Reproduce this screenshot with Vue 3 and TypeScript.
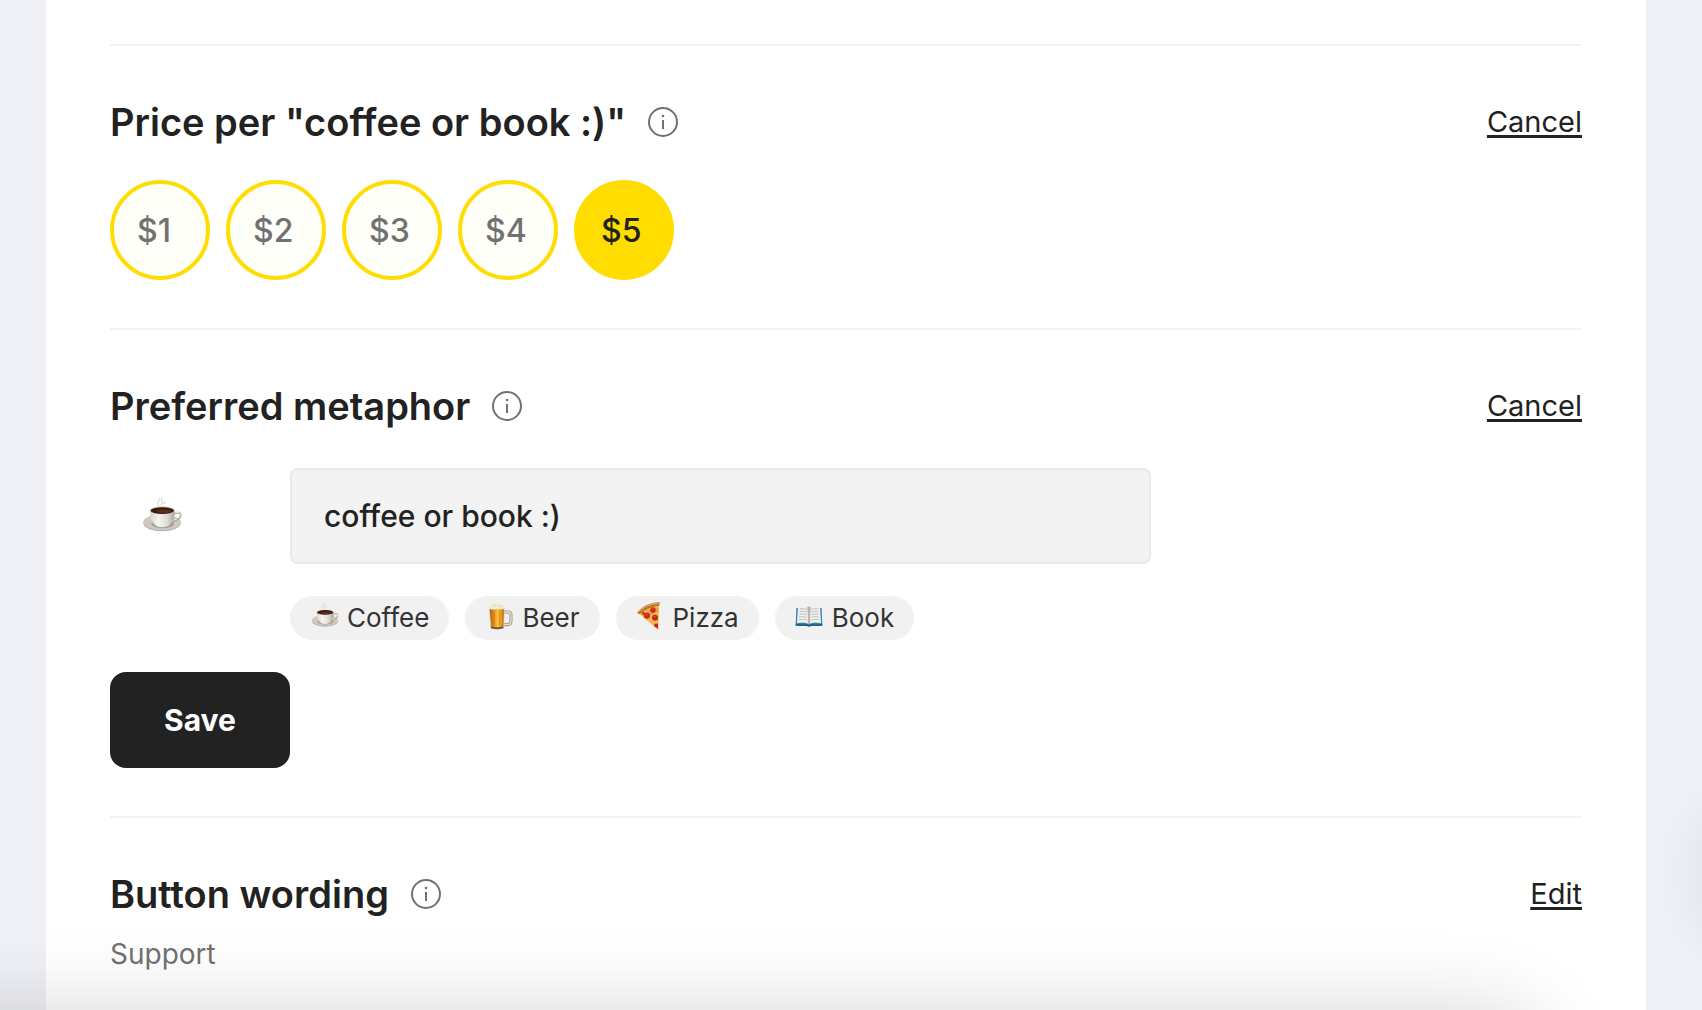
<script setup lang="ts">
import { ref } from 'vue'

const prices = [1, 2, 3, 4, 5]
const price = ref(5)
const metaphor = ref('coffee or book :)')
const presets = ['Coffee', 'Beer', 'Pizza', 'Book'] as const
</script>

<template>
  <div class="page">
    <svg class="defs" aria-hidden="true">
      <defs>
        <linearGradient id="cup-body" x1="0" x2="1">
          <stop offset="0" stop-color="#d9d5cf" />
          <stop offset="0.35" stop-color="#f6f4f0" />
          <stop offset="0.7" stop-color="#dedad4" />
          <stop offset="1" stop-color="#a9a49c" />
        </linearGradient>
        <linearGradient id="beer-fill" x1="0" x2="1">
          <stop offset="0" stop-color="#a9570c" />
          <stop offset="0.25" stop-color="#e08a1c" />
          <stop offset="0.6" stop-color="#ffc93c" />
          <stop offset="1" stop-color="#c4690f" />
        </linearGradient>
        <g id="cup">
          <path d="M84 62q-8-8 0-14 6-4 0-10M90 60q10-6 3-12-7-5 4-10M99 58q6-6 0-10" fill="none" stroke="#d2d2d2" stroke-width="3" />
          <ellipse cx="94" cy="114" rx="56" ry="25" fill="#b5b0a7" />
          <ellipse cx="94" cy="112" rx="56" ry="24" fill="#cdc9c1" />
          <ellipse cx="96" cy="116" rx="34" ry="14" fill="#a39d93" />
          <path d="M130 86q18-7 20 4 0 12-23 18" fill="none" stroke="#aaa59c" stroke-width="6" />
          <path d="M131 84q17-5 18 5 0 9-21 17" fill="none" stroke="#efece7" stroke-width="3" />
          <path d="M57 76q1 51 38 51t38-51z" fill="url(#cup-body)" />
          <ellipse cx="95" cy="76" rx="38" ry="12" fill="#d8d3cc" />
          <ellipse cx="95" cy="77" rx="35" ry="10" fill="#3a1d10" />
          <ellipse cx="99" cy="79" rx="22" ry="5" fill="#5b301b" />
        </g>
      </defs>
    </svg>

    <main class="panel">
      <section class="section">
        <header class="head">
          <h2>Price per "coffee or book :)"</h2>
          <svg class="info" viewBox="0 0 30 30" aria-hidden="true">
            <circle cx="15" cy="15" r="14" />
            <path d="M15 13V22" />
            <circle class="dot" cx="15" cy="9" r="1.3" />
          </svg>
          <a class="action" href="#">Cancel</a>
        </header>
        <div class="prices" role="radiogroup" aria-label="Price">
          <label v-for="p in prices" :key="p" class="price" :class="{ selected: p === price }">
            <input v-model="price" type="radio" name="price" :value="p" />
            <span>${{ p }}</span>
          </label>
        </div>
      </section>

      <section class="section">
        <header class="head">
          <h2>Preferred metaphor</h2>
          <svg class="info" viewBox="0 0 30 30" aria-hidden="true">
            <circle cx="15" cy="15" r="14" />
            <path d="M15 13V22" />
            <circle class="dot" cx="15" cy="9" r="1.3" />
          </svg>
          <a class="action" href="#">Cancel</a>
        </header>
        <form @submit.prevent>
          <div class="metaphor">
            <div class="emoji">
              <svg viewBox="34 30 120 114" aria-hidden="true"><use href="#cup" /></svg>
            </div>
            <input v-model="metaphor" class="field" type="text" aria-label="Preferred metaphor" />
            <div class="presets">
              <button v-for="name in presets" :key="name" type="button" class="preset" @click="metaphor = name.toLowerCase()">
                <svg viewBox="0 0 84 96" aria-hidden="true">
                  <g v-if="name === 'Coffee'" transform="translate(-20 -22) scale(0.69)"><use href="#cup" /></g>
                  <g v-else-if="name === 'Beer'">
                    <path d="M55 30h14q9 0 9 10v17q0 11-10 11H55" fill="none" stroke="#99928a" stroke-width="9" />
                    <path d="M55 30h14q9 0 9 10v17q0 11-10 11H55" fill="none" stroke="#e6e1da" stroke-width="4" />
                    <path d="M12 14h47l-2 64q-21 8-41 0z" fill="#d9c7b0" />
                    <path d="M14 18h43l-2 56q-19 6-36 0z" fill="url(#beer-fill)" />
                    <path d="M27 26v44M43 26v44" stroke="#b8660f" stroke-width="3" opacity="0.5" />
                    <path d="M18 73q19 6 37 0v6q-18 6-37 0z" fill="#7d5237" />
                    <path d="M12 20q-4-9 7-12 7-8 18-5 10-2 15 5 10 2 7 12-10 4-20 0-12 5-27 0z" fill="#f4ead9" />
                    <path d="M20 13q7-6 14-3M42 13q5-3 10 0" fill="none" stroke="#d8c5aa" stroke-width="2" />
                  </g>
                  <g v-else-if="name === 'Pizza'">
                    <path d="M8 34Q32 12 69 8l-2 76Z" fill="#f2b950" />
                    <path d="M16 38Q38 22 67 18v10L28 49z" fill="#e98a36" opacity="0.6" />
                    <path d="M4 31Q28 2 70 0q3 5-1 11Q34 14 11 37q-5 0-7-6z" fill="#b8722a" />
                    <path d="M8 29Q32 6 69 3" fill="none" stroke="#dfa35a" stroke-width="4" />
                    <g fill="#c8261c">
                      <circle cx="51" cy="24" r="8" />
                      <circle cx="33" cy="41" r="9" />
                      <circle cx="57" cy="47" r="9" />
                      <path d="M66 65q-12-2-12 7l12 8z" />
                      <circle cx="22" cy="34" r="4" />
                    </g>
                    <path d="M47 22q4-4 7 0M29 39q4-4 7 0M53 45q4-4 7 0" fill="none" stroke="#ec6a48" stroke-width="2" />
                  </g>
                  <g v-else>
                    <path d="M4 18h76l2 52q-28 3-34 1-6 3-12 0-6 2-34-1z" fill="#3587ae" />
                    <path d="M2 65q22 3 34 1 6 4 12 0 12 2 34-1v6q-22 2-34 1-6 3-12 0-12 1-34-1z" fill="#235f81" />
                    <path d="M9 13q22-7 33 1 11-8 33-1l3 51q-24-6-36 3-12-9-36-3z" fill="#f3f1ed" />
                    <path d="M42 14v53" stroke="#77716b" stroke-width="3" />
                    <path d="M38 15q3 22 2 48M46 15q-3 22-2 48" stroke="#bdb8b1" stroke-width="3" fill="none" />
                    <path d="M14 21q11-3 21 1M14 29q11-3 21 1M13 37q11-3 22 1M12 45q11-3 23 1M12 53q11-3 23 1M49 22q10-4 21-1M49 30q10-4 21-1M49 38q10-4 22-1M49 46q10-4 23-1M49 54q10-4 23-1" fill="none" stroke="#aaa6a0" stroke-width="2" />
                  </g>
                </svg>
                <span>{{ name }}</span>
              </button>
            </div>
          </div>
          <button type="submit" class="save">Save</button>
        </form>
      </section>

      <section class="section">
        <header class="head">
          <h2>Button wording</h2>
          <svg class="info" viewBox="0 0 30 30" aria-hidden="true">
            <circle cx="15" cy="15" r="14" />
            <path d="M15 13V22" />
            <circle class="dot" cx="15" cy="9" r="1.3" />
          </svg>
          <a class="action" href="#">Edit</a>
        </header>
        <p class="value">Support</p>
      </section>
    </main>

    <div class="shade shade-bar" aria-hidden="true"></div>
    <div class="shade shade-bubble" aria-hidden="true"></div>
  </div>
</template>

<style>
body {
  background: #f0f1f6;
}
</style>

<style scoped>
.page {
  position: relative;
  box-sizing: border-box;
  min-height: 100vh;
  padding: 0 56px 0 46px;
  display: flex;
  overflow: hidden;
  background: #f0f1f6;
  color: #222;
  font-family: Inter, "Liberation Sans", sans-serif;
}

.defs {
  position: absolute;
  width: 0;
  height: 0;
}

.panel {
  flex: 1;
  min-width: 0;
  padding: 44px 64px 0;
  background: #fff;
}

.section {
  padding: 52px 0 48px;
  border-top: 2px solid #f3f3f3;
}

.section:last-child {
  padding-bottom: 0;
}

.head {
  display: flex;
  align-items: center;
  height: 48px;
}

h2 {
  margin: 0;
  font-size: 38px;
  line-height: 46px;
  font-weight: 600;
}

.info {
  width: 30px;
  height: 30px;
  margin-left: 22px;
  fill: none;
  stroke: #717171;
  stroke-width: 2;
}

.info .dot {
  fill: #717171;
  stroke: none;
}

.action {
  margin-left: auto;
  color: #222;
  font-size: 29px;
  line-height: 36px;
  text-decoration: underline;
  text-decoration-thickness: 3px;
  text-underline-offset: 3px;
  text-decoration-skip-ink: none;
}

.prices {
  display: flex;
  gap: 16px;
  margin-top: 34px;
}

.price {
  box-sizing: border-box;
  width: 100px;
  height: 100px;
  padding-left: 23px;
  display: flex;
  align-items: center;
  border: 4px solid #fd0;
  border-radius: 50%;
  background: #fffffa;
  color: #717171;
  font-size: 32px;
  font-weight: 500;
  cursor: pointer;
}

.price.selected {
  background: #fd0;
  color: #222;
}

.price input {
  appearance: none;
  width: 0;
  height: 0;
  margin: 0;
}

.metaphor {
  display: grid;
  grid-template-columns: 180px minmax(0, 2fr) minmax(0, 1fr);
  row-gap: 32px;
  margin-top: 38px;
}

.emoji {
  display: flex;
  align-items: center;
  padding: 0 0 4px 32px;
}

.emoji svg {
  width: 40px;
  height: 38px;
}

.field {
  box-sizing: border-box;
  width: 100%;
  height: 96px;
  padding: 0 32px;
  border: 2px solid #e9e9e9;
  border-radius: 8px;
  background: #f3f3f3;
  color: #222;
  font: 500 30px/40px Inter, "Liberation Sans", sans-serif;
}

.presets {
  grid-column: 2 / -1;
  display: flex;
  flex-wrap: wrap;
  gap: 16px;
}

.preset {
  display: flex;
  align-items: center;
  gap: 9px;
  height: 44px;
  padding: 0 20px;
  border: 0;
  border-radius: 22px;
  background: #f1f1f1;
  color: #333;
  font: 400 26px/32px Inter, "Liberation Sans", sans-serif;
  cursor: pointer;
}

.preset svg {
  width: 28px;
  height: 32px;
}

.save {
  display: block;
  width: 180px;
  height: 96px;
  margin-top: 32px;
  padding: 0;
  border: 0;
  border-radius: 16px;
  background: #222;
  color: #fff;
  font: 700 30px/40px Inter, "Liberation Sans", sans-serif;
  cursor: pointer;
}

.value {
  margin: 18px 0 0;
  color: #717171;
  font-size: 28px;
  line-height: 36px;
}

/* Soft shadows of the floating bar and chat bubble just past the window edges */
.shade {
  position: absolute;
  pointer-events: none;
}

.shade-bar {
  left: -160px;
  right: 160px;
  bottom: -160px;
  height: 160px;
  border-radius: 60px;
  box-shadow: 0 0 84px rgba(0, 0, 0, 0.16);
}

.shade-bubble {
  right: -132px;
  bottom: 75px;
  width: 120px;
  height: 120px;
  border-radius: 50%;
  box-shadow: 0 0 80px rgba(0, 0, 0, 0.14);
}
</style>
